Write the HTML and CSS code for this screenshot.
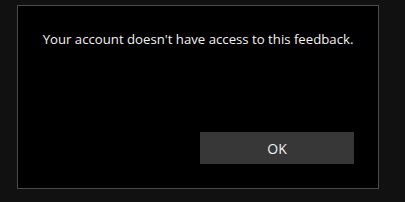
FILE: index.html
```html
<!DOCTYPE html>
<html lang="en">
<head>
  <meta charset="UTF-8" />
  <title>Feedback</title>
  <link rel="stylesheet" href="styles.css">
</head>
<body>
  <div class="dialog">
    <p class="message">Your account doesn't have access to this feedback.</p>
    <div class="actions">
      <button class="ok">OK</button>
    </div>
  </div>
</body>
</html>
```

FILE: styles.css
```css
html, body {
  margin: 0;
  height: 100%;
  background-color: #111111;
  font-family: 'Open Sans', 'Noto Sans', sans-serif;
}

body {
  padding: 5px 0 0 17px;
  box-sizing: border-box;
}

.dialog {
  width: 362px;
  height: 184px;
  box-sizing: border-box;
  background-color: #000;
  border: 1px solid #4b4b4b;
  display: flex;
  flex-direction: column;
}

.message {
  margin: 23px 0 0;
  color: #f2f2f2;
  font-size: 13.2px;
  line-height: 20px;
  text-align: center;
}

.actions {
  display: flex;
  justify-content: flex-end;
  margin-top: 83px;
  padding-right: 24px;
}

.ok {
  width: 154px;
  height: 32px;
  border: none;
  background-color: #373737;
  color: #f2f2f2;
  font-family: inherit;
  font-size: 14px;
  padding: 0;
}
```
